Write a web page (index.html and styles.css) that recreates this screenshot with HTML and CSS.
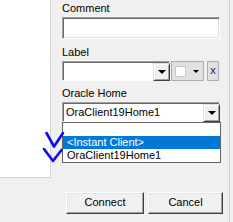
FILE: index.html
```html
<!DOCTYPE html>
<html>
<head>
<meta charset="utf-8">
<link rel="stylesheet" href="styles.css">
</head>
<body>
<div class="window">
  <div class="side-panel"></div>
  <div class="form">
    <div class="caption cap-comment">Comment</div>
    <div class="edit"></div>
    <div class="caption cap-label">Label</div>
    <div class="label-row">
      <div class="combo combo-label">
        <div class="combo-text"></div>
        <div class="drop"><span class="tri"></span></div>
      </div>
      <div class="color-btn">
        <span class="swatch"></span>
        <span class="tri tri-small"></span>
      </div>
      <div class="clear-btn">x</div>
    </div>
    <div class="caption cap-home">Oracle Home</div>
    <div class="combo combo-home">
      <div class="combo-text">OraClient19Home1</div>
      <div class="drop"><span class="tri"></span></div>
    </div>
    <div class="list">
      <div class="item"></div>
      <div class="item selected">&lt;Instant Client&gt;</div>
      <div class="item">OraClient19Home1</div>
    </div>
    <div class="buttons">
      <div class="btn btn-connect">Connect</div>
      <div class="btn btn-cancel">Cancel</div>
    </div>
  </div>
  <div class="edge"></div>
</div>
<svg class="marks" width="233" height="222" viewBox="0 0 233 222">
  <path d="M46.5 133 L54 146.5 L63 133" />
  <path d="M44 149 L53 161 L61.5 150" />
</svg>
</body>
</html>
```

FILE: styles.css
```css
html, body {
  margin: 0;
  padding: 0;
}
body {
  width: 233px;
  height: 222px;
  overflow: hidden;
  background: #f0f0f0;
  font-family: "Liberation Sans", Arial, sans-serif;
  font-size: 11px;
  line-height: 13px;
  color: #000;
  position: relative;
}
.window {
  display: flex;
  height: 222px;
}
.side-panel {
  width: 50px;
  height: 177px;
  flex-shrink: 0;
  background: #fff;
  border-right: 1px solid #d6d6d6;
  border-bottom: 1px solid #d6d6d6;
}
.form {
  margin-left: 11px;
  width: 161px;
  display: flex;
  flex-direction: column;
  flex-shrink: 0;
}
.caption {
  height: 13px;
  white-space: nowrap;
}
.cap-comment { margin-top: 2px; }
.cap-label { margin-top: 7px; }
.cap-home { margin-top: 6px; }
.edit {
  margin-top: 2px;
  width: 158px;
  height: 22px;
  box-sizing: border-box;
  background: #fff;
  border: 1px solid;
  border-color: #a0a0a0 #fff #fff #a0a0a0;
  box-shadow: inset 1px 1px #696969, inset -1px -1px #e3e3e3;
}
.label-row {
  margin-top: 2px;
  display: flex;
  height: 20px;
}
.combo {
  display: flex;
  box-sizing: border-box;
  background: #fff;
  border: 1px solid;
  border-color: #a0a0a0 #fff #fff #a0a0a0;
  box-shadow: inset 1px 1px #696969;
  padding: 1px 0 0 1px;
}
.combo-label {
  width: 108px;
  height: 20px;
}
.combo-home {
  margin-top: 2px;
  width: 158px;
  height: 20px;
}
.combo-text {
  flex: 1;
  padding-left: 2px;
  line-height: 17px;
  white-space: nowrap;
  overflow: hidden;
}
.drop {
  width: 17px;
  height: 18px;
  margin: 0 -1px -1px 0;
  box-sizing: border-box;
  background: #f0f0f0;
  border: 1px solid;
  border-color: #e3e3e3 #404040 #404040 #e3e3e3;
  box-shadow: inset 1px 1px #fff, inset -1px -1px #a0a0a0;
  display: flex;
  align-items: center;
  justify-content: center;
}
.tri {
  width: 0;
  height: 0;
  border-left: 4px solid transparent;
  border-right: 4px solid transparent;
  border-top: 4px solid #000;
}
.tri-small {
  border-left-width: 3px;
  border-right-width: 3px;
  border-top-width: 3px;
  margin-left: 7px;
}
.color-btn {
  margin-left: 1px;
  width: 33px;
  height: 20px;
  box-sizing: border-box;
  background: #e1e1e1;
  border: 1px solid #adadad;
  display: flex;
  align-items: center;
  padding-left: 3px;
}
.swatch {
  width: 11px;
  height: 11px;
  box-sizing: border-box;
  background: #fff;
  border: 1px solid #c8c8c8;
}
.clear-btn {
  margin-left: 3px;
  width: 12px;
  height: 20px;
  box-sizing: border-box;
  background: #e1e1e1;
  border: 1px solid #adadad;
  text-align: center;
  line-height: 17px;
  color: #1a1a50;
}
.list {
  width: 159px;
  box-sizing: border-box;
  background: #fff;
  border: 1px solid #646464;
}
.item {
  height: 13px;
  padding-left: 4px;
  white-space: nowrap;
}
.selected {
  background: #0078d7;
  color: #fff;
}
.buttons {
  margin-top: 29px;
  padding-left: 4px;
  display: flex;
  gap: 4px;
}
.btn {
  height: 22px;
  box-sizing: border-box;
  background: #f0f0f0;
  border: 1px solid;
  border-color: #fff #404040 #404040 #fff;
  box-shadow: inset -1px -1px #a0a0a0, inset 1px 1px #e3e3e3;
  text-align: center;
  line-height: 19px;
}
.btn-connect { width: 78px; }
.btn-cancel { width: 75px; }
.edge {
  margin-left: 6px;
  width: 1px;
  height: 222px;
  background: #d0d0d0;
}
.marks {
  position: absolute;
  left: 0;
  top: 0;
  pointer-events: none;
}
.marks path {
  fill: none;
  stroke: #0a0af5;
  stroke-width: 2.6;
  stroke-linecap: round;
  stroke-linejoin: round;
}
```
